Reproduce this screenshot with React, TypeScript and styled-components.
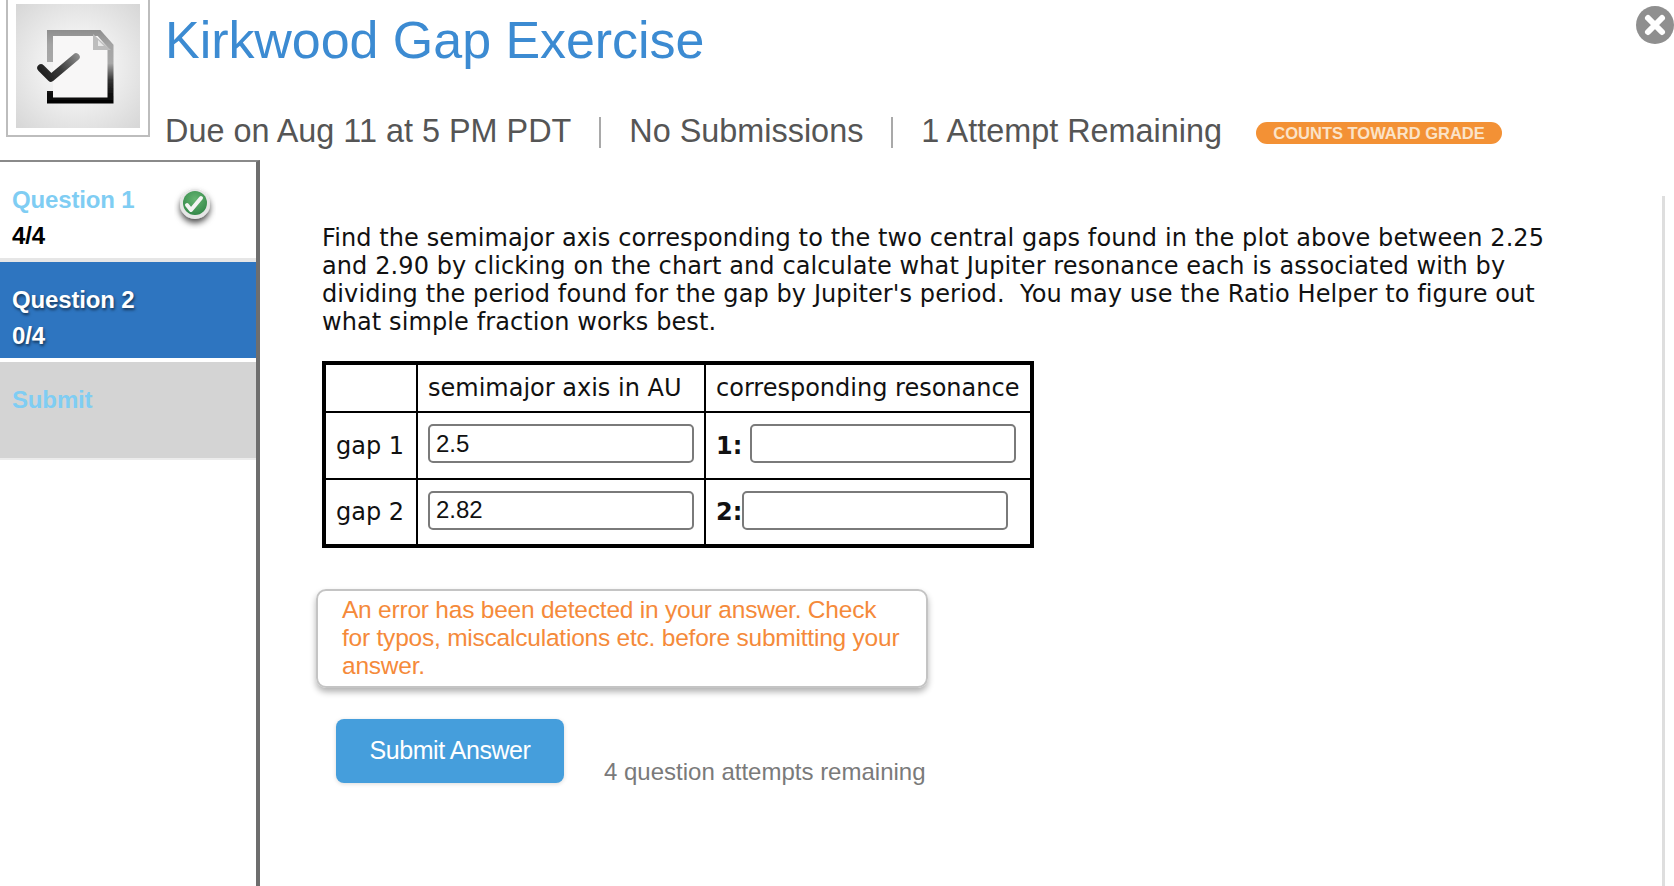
import { createGlobalStyle, styled } from "styled-components";

const GlobalStyle = createGlobalStyle`
  html, body {
    margin: 0;
    padding: 0;
    background: #fff;
    overflow: hidden;
  }
  body {
    font-family: "Liberation Sans", Arial, sans-serif;
  }
`;

const Page = styled.div`
  width: 1674px;
  height: 886px;
  position: relative;
  overflow: hidden;
  display: flex;
  flex-direction: column;
`;

const Header = styled.header`
  height: 160px;
  display: flex;
  align-items: flex-start;
  gap: 15px;
  padding-left: 6px;
  flex-shrink: 0;
`;

const Thumb = styled.div`
  width: 124px;
  height: 124px;
  padding: 4px 8px 7px 8px;
  border: 2px solid #bdbdbd;
  border-top: none;
  flex-shrink: 0;
`;

const ThumbInner = styled.div`
  width: 100%;
  height: 100%;
  background: radial-gradient(circle at 50% 50%, #fbfbfb 0%, #f0f0f0 40%, #d6d6d6 100%);
  display: flex;
  align-items: center;
  justify-content: center;
`;

const HeaderText = styled.div`
  display: flex;
  flex-direction: column;
`;

const Title = styled.h1`
  margin: 9px 0 0;
  font-size: 52px;
  line-height: 62px;
  font-weight: 400;
  color: #3c8bd2;
  letter-spacing: -0.05px;
`;

const MetaRow = styled.div`
  display: flex;
  align-items: center;
  margin-top: 40px;
  font-size: 32.4px;
  line-height: 40px;
  color: #555;
`;

const MetaDivider = styled.span`
  width: 2px;
  height: 31px;
  margin: 2px 28px 0 28px;
  background: #a9a9a9;
`;

const Badge = styled.span`
  margin: 4px 0 0 34px;
  width: 246px;
  height: 22px;
  border-radius: 11px;
  background: #f39135;
  color: #fbe3c8;
  font-size: 16.5px;
  font-weight: 700;
  line-height: 22px;
  text-align: center;
`;

const CloseButton = styled.button`
  position: absolute;
  top: 6px;
  right: 0;
  width: 38px;
  height: 38px;
  padding: 0;
  border: none;
  border-radius: 50%;
  background: #8f8f8f;
  display: flex;
  align-items: center;
  justify-content: center;
`;

const Body = styled.div`
  flex: 1;
  display: flex;
  min-height: 0;
`;

const Sidebar = styled.nav`
  width: 260px;
  flex-shrink: 0;
  box-sizing: border-box;
  border-top: 2px solid #8a8a8a;
  border-right: 4px solid #6e6e6e;
`;

const NavItem = styled.div<{ $kind: "done" | "active" | "disabled" }>`
  box-sizing: border-box;
  height: ${(p) => (p.$kind === "disabled" ? 98 : 100)}px;
  padding: 20px 0 0 12px;
  display: flex;
  align-items: flex-start;
  font-size: 24px;
  line-height: 35.5px;
  font-weight: 700;
  letter-spacing: -0.15px;
  background: ${(p) =>
    p.$kind === "active" ? "#2e75c0" : p.$kind === "disabled" ? "#d4d4d4" : "#fff"};
  color: ${(p) => (p.$kind === "active" ? "#fff" : "#7fcdf3")};
  border-bottom: ${(p) =>
    p.$kind === "active" ? "4px solid #fff" : p.$kind === "disabled" ? "2px solid #ececec" : "4px solid #e6e6e6"};
  text-shadow: ${(p) => (p.$kind === "active" ? "1px 2px 3px rgba(0, 0, 0, 0.55)" : "none")};
  box-shadow: ${(p) => (p.$kind === "active" ? "inset 0 -2px 0 #2e75c0, 0 2px 0 #8f8f8f" : "none")};
`;

const Score = styled.div<{ $light?: boolean }>`
  color: ${(p) => (p.$light ? "#fff" : "#000")};
`;

const CheckBadge = styled.svg`
  margin: 3px 0 0 39px;
  flex-shrink: 0;
`;

const Main = styled.main`
  flex: 1;
  min-width: 0;
  padding: 36px 9px 0 62px;
  display: flex;
`;

const Panel = styled.div`
  flex: 1;
  border-right: 3px solid #dedede;
`;

const Prompt = styled.p`
  margin: 28px 0 0;
  width: 1240px;
  font-family: "DejaVu Sans", Verdana, sans-serif;
  font-size: 24px;
  line-height: 28px;
  letter-spacing: 0.1px;
  color: #111;
`;

const AnswerTable = styled.table`
  margin-top: 25px;
  width: 708px;
  table-layout: fixed;
  border-collapse: collapse;
  border: 4px solid #000;
  font-family: "DejaVu Sans", Verdana, sans-serif;
  font-size: 24px;
  color: #111;
`;

const Cell = styled.td`
  box-sizing: border-box;
  border: 2px solid #000;
  padding: 0 0 0 10px;
  white-space: nowrap;
`;

const HeaderRow = styled.tr`
  height: 49px;
`;

const InputRow = styled.tr`
  height: 67px;
`;

const ResonanceCell = styled.div`
  display: flex;
  align-items: center;
`;

const Ratio = styled.b<{ $gap: number }>`
  width: ${(p) => p.$gap}px;
  flex-shrink: 0;
  font-weight: 700;
`;

const TextInput = styled.input`
  box-sizing: border-box;
  width: 266px;
  height: 39px;
  margin-bottom: 4px;
  padding: 0 6px;
  border: 2px solid #7a7a7a;
  border-radius: 5px;
  background: #fff;
  font-family: "Liberation Sans", Arial, sans-serif;
  font-size: 24px;
  color: #111;
  display: block;
`;

const Alert = styled.div`
  box-sizing: border-box;
  margin: 41px 0 0 -6px;
  width: 612px;
  height: 99px;
  padding: 5px 20px 0 24px;
  border: 2px solid #c4c4c4;
  border-radius: 10px;
  box-shadow: 0 4px 6px rgba(0, 0, 0, 0.3);
  color: #f58a3a;
  font-size: 24.5px;
  line-height: 28px;
  letter-spacing: -0.22px;
`;

const ActionRow = styled.div`
  margin: 31px 0 0 14px;
  display: flex;
  align-items: flex-end;
  gap: 40px;
`;

const SubmitButton = styled.button`
  width: 228px;
  height: 64px;
  padding-bottom: 3px;
  border: none;
  border-radius: 8px;
  background: #459edc;
  box-shadow: 0 1px 4px rgba(0, 0, 0, 0.15);
  color: #fff;
  font-family: "Liberation Sans", Arial, sans-serif;
  font-size: 25px;
  letter-spacing: -0.45px;
`;

const Attempts = styled.span`
  font-size: 24px;
  line-height: 28px;
  margin-bottom: -3px;
  color: #7a7a7a;
`;

// viewBox uses the same numbers as the page so the strokes can be read off the screenshot
function ExerciseIcon() {
  return (
    <svg width="124" height="124" viewBox="16 4 124 124">
      <defs>
        <linearGradient id="docStroke" gradientUnits="userSpaceOnUse" x1="0" y1="30" x2="0" y2="104">
          <stop offset="0" stopColor="#8e8e8e" />
          <stop offset="0.2" stopColor="#a4a4a4" />
          <stop offset="0.45" stopColor="#a8a8a8" />
          <stop offset="0.68" stopColor="#333" />
          <stop offset="0.85" stopColor="#111" />
          <stop offset="1" stopColor="#000" />
        </linearGradient>
        <linearGradient id="checkStroke" gradientUnits="userSpaceOnUse" x1="40" y1="80" x2="78" y2="55">
          <stop offset="0" stopColor="#1a1a1a" />
          <stop offset="0.5" stopColor="#3a3a3a" />
          <stop offset="1" stopColor="#8c8c8c" />
        </linearGradient>
        <filter id="iconBlur">
          <feGaussianBlur stdDeviation="0.7" />
        </filter>
      </defs>
      <g filter="url(#iconBlur)">
        <path d="M53 36H100L110 47V98H53Z" fill="#f8f7f7" />
        <path d="M50 62V33H99L110.5 46V100.5H50V91" fill="none" stroke="url(#docStroke)" strokeWidth="6" />
        <path d="M93 34V50H111Z" fill="#bdbdbd" />
        <path d="M98 40L98 46H104Z" fill="#e8e8e8" />
        <path d="M41 68L51 78L76 57" fill="none" stroke="url(#checkStroke)" strokeWidth="7.5" strokeLinecap="round" strokeLinejoin="round" />
      </g>
    </svg>
  );
}

function App() {
  return (
    <Page>
      <GlobalStyle />
      <Header>
        <Thumb>
          <ThumbInner>
            <ExerciseIcon />
          </ThumbInner>
        </Thumb>
        <HeaderText>
          <Title>Kirkwood Gap Exercise</Title>
          <MetaRow>
            <span>Due on Aug 11 at 5 PM PDT</span>
            <MetaDivider />
            <span>No Submissions</span>
            <MetaDivider />
            <span>1 Attempt Remaining</span>
            <Badge>COUNTS TOWARD GRADE</Badge>
          </MetaRow>
        </HeaderText>
      </Header>
      <CloseButton aria-label="Close">
        <svg width="24" height="24" viewBox="0 0 24 24">
          <path d="M5 5L19 19M19 5L5 19" stroke="#fff" strokeWidth="6" strokeLinecap="round" />
        </svg>
      </CloseButton>
      <Body>
        <Sidebar>
          <NavItem $kind="done">
            <div>
              Question 1
              <Score>4/4</Score>
            </div>
            <CheckBadge width="42" height="44" viewBox="0 0 42 44">
              <defs>
                <filter id="badgeShadow" x="-40%" y="-40%" width="180%" height="190%">
                  <feDropShadow dx="0" dy="4" stdDeviation="3" floodColor="#000" floodOpacity="0.7" />
                </filter>
                <radialGradient id="badgeFill" cx="50%" cy="35%" r="65%">
                  <stop offset="0" stopColor="#66b572" />
                  <stop offset="1" stopColor="#35894a" />
                </radialGradient>
              </defs>
              <circle cx="21" cy="19" r="15" fill="#e6e6e6" filter="url(#badgeShadow)" />
              <circle cx="21" cy="18" r="12" fill="url(#badgeFill)" />
              <path d="M13 20L17 25L27 13" fill="none" stroke="#f4f4f4" strokeWidth="4" strokeLinecap="round" strokeLinejoin="round" />
            </CheckBadge>
          </NavItem>
          <NavItem $kind="active">
            <div>
              Question 2
              <Score $light>0/4</Score>
            </div>
          </NavItem>
          <NavItem $kind="disabled">Submit</NavItem>
        </Sidebar>
        <Main>
          <Panel>
            <Prompt>
              Find the semimajor axis corresponding to the two central gaps found in the plot above between 2.25
              and 2.90 by clicking on the chart and calculate what Jupiter resonance each is associated with by
              dividing the period found for the gap by Jupiter's period.&nbsp; You may use the Ratio Helper to
              figure out what simple fraction works best.
            </Prompt>
            <AnswerTable>
              <colgroup>
                <col style={{ width: 93 }} />
                <col style={{ width: 288 }} />
                <col style={{ width: 327 }} />
              </colgroup>
              <tbody>
                <HeaderRow>
                  <Cell />
                  <Cell>semimajor axis in AU</Cell>
                  <Cell>corresponding resonance</Cell>
                </HeaderRow>
                <InputRow>
                  <Cell>gap 1</Cell>
                  <Cell>
                    <TextInput defaultValue="2.5" />
                  </Cell>
                  <Cell>
                    <ResonanceCell>
                      <Ratio $gap={34}>1:</Ratio>
                      <TextInput />
                    </ResonanceCell>
                  </Cell>
                </InputRow>
                <InputRow>
                  <Cell>gap 2</Cell>
                  <Cell>
                    <TextInput defaultValue="2.82" />
                  </Cell>
                  <Cell>
                    <ResonanceCell>
                      <Ratio $gap={26}>2:</Ratio>
                      <TextInput />
                    </ResonanceCell>
                  </Cell>
                </InputRow>
              </tbody>
            </AnswerTable>
            <Alert>An error has been detected in your answer. Check for typos, miscalculations etc. before submitting your answer.</Alert>
            <ActionRow>
              <SubmitButton>Submit Answer</SubmitButton>
              <Attempts>4 question attempts remaining</Attempts>
            </ActionRow>
          </Panel>
        </Main>
      </Body>
    </Page>
  );
}

export default App;
